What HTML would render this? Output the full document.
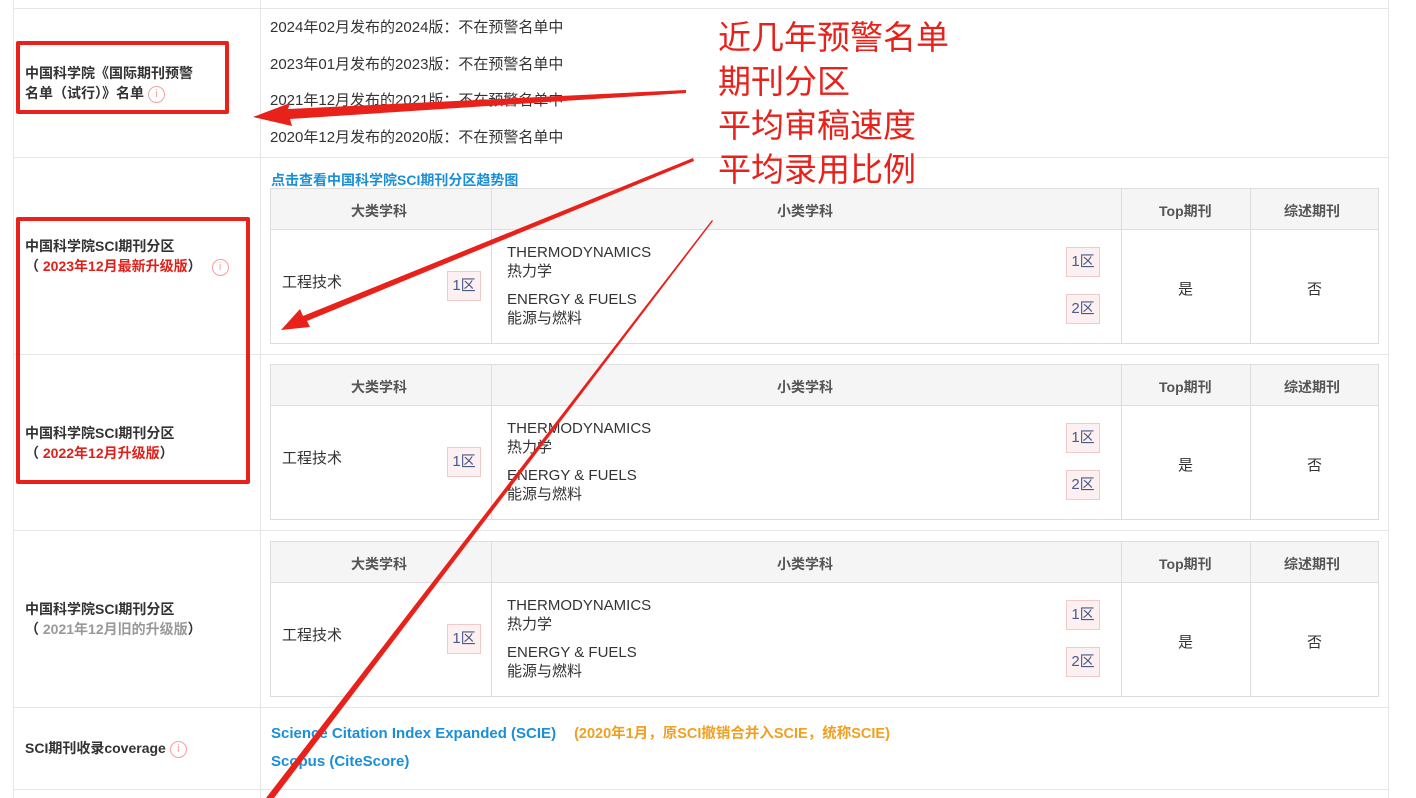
<!DOCTYPE html>
<html><head><meta charset="utf-8"><style>
body{margin:0;width:1416px;height:798px;background:#fff;position:relative;overflow:hidden;font-family:"Liberation Sans","Noto Sans CJK SC",sans-serif;color:#333}
.a{position:absolute}
.hl{position:absolute;height:1px;background:#e6e6e6}
.vl{position:absolute;width:1px;background:#e6e6e6}
.lab{position:absolute;left:25px;font-size:14px;font-weight:bold;line-height:20px;color:#333}
.t{position:absolute;left:270px;width:1107px;border:1px solid #ddd;font-size:15px}
.th{height:40px;background:#f5f5f5;border-bottom:1px solid #ddd;position:relative;font-size:14px}
.th span{position:absolute;top:12px;font-weight:bold;color:#555}
.z{position:absolute;width:32px;height:28px;border:1px solid #f2c9c9;background:#fdf0f0;color:#4a5a8a;font-size:15px;line-height:28px;text-align:center}
.info{display:inline-block;width:15px;height:15px;border:1.5px solid #f3a0a0;border-radius:50%;color:#f3a0a0;font-size:11px;line-height:15px;text-align:center;font-weight:normal;vertical-align:middle;margin-left:4px}
.ann{position:absolute;left:718px;font-size:33px;color:#e8211b;line-height:44px}
.rb{position:absolute;border:4px solid #e8211b;border-radius:2px}
</style></head><body>
<div class="vl" style="left:13px;top:0;height:798px"></div>
<div class="vl" style="left:260px;top:0;height:798px"></div>
<div class="vl" style="left:1388px;top:0;height:798px"></div>
<div class="hl" style="left:13px;width:1376px;top:8px"></div>
<div class="hl" style="left:13px;width:1376px;top:157px"></div>
<div class="hl" style="left:13px;width:1376px;top:354px"></div>
<div class="hl" style="left:13px;width:1376px;top:530px"></div>
<div class="hl" style="left:13px;width:1376px;top:707px"></div>
<div class="hl" style="left:13px;width:1376px;top:789px"></div>

<div class="a" style="left:270px;top:10px;font-size:15px;line-height:36.7px">2024年02月发布的2024版：不在预警名单中<br>2023年01月发布的2023版：不在预警名单中<br>2021年12月发布的2021版：不在预警名单中<br>2020年12月发布的2020版：不在预警名单中</div>
<div class="lab" style="top:63px">中国科学院《国际期刊预警<br>名单（试行）》名单<span class="info">i</span></div>

<div class="a" style="left:271px;top:170px;font-size:14px;font-weight:bold;color:#1a8fd8">点击查看中国科学院SCI期刊分区趋势图</div>
<div class="lab" style="top:236px">中国科学院SCI期刊分区<br>（ <span style="color:#e0201b">2023年12月最新升级版</span>）<span class="info" style="margin-left:10px">i</span></div>
<div class="lab" style="top:423px">中国科学院SCI期刊分区<br>（ <span style="color:#e0201b">2022年12月升级版</span>）</div>
<div class="lab" style="top:599px">中国科学院SCI期刊分区<br>（ <span style="color:#999">2021年12月旧的升级版</span>）</div>
<div class="lab" style="top:738px">SCI期刊收录coverage<span class="info">i</span></div>
<div class="a" style="left:271px;top:722px;font-size:15px;font-weight:bold;color:#1a8fd8">Science Citation Index Expanded (SCIE)<span style="color:#f0a020;margin-left:18px;font-size:14.5px">(2020年1月，原SCI撤销合并入SCIE，统称SCIE)</span></div>
<div class="a" style="left:271px;top:753px;font-size:15px;font-weight:bold;color:#1a8fd8">Scopus (CiteScore)</div>

<div class="t" style="top:188px;height:154px"></div>
<div class="t" style="top:364px;height:154px"></div>
<div class="t" style="top:541px;height:154px"></div>
<script>
document.querySelectorAll('.t').forEach(function(t){
t.innerHTML='<div class="th"><span style="left:80px">大类学科</span><span style="left:506px">小类学科</span><span style="left:888px">Top期刊</span><span style="left:1013px">综述期刊</span></div>'+
'<div class="vl" style="left:220px;top:0;height:154px;background:#ddd"></div><div class="vl" style="left:850px;top:0;height:154px;background:#ddd"></div><div class="vl" style="left:979px;top:0;height:154px;background:#ddd"></div>'+
'<div class="a" style="left:11px;top:82px">工程技术</div><div class="z" style="left:176px;top:82px">1区</div>'+
'<div class="a" style="left:236px;top:54px;line-height:19px">THERMODYNAMICS<br>热力学</div><div class="a" style="left:236px;top:101px;line-height:19px">ENERGY &amp; FUELS<br>能源与燃料</div>'+
'<div class="z" style="left:795px;top:58px">1区</div><div class="z" style="left:795px;top:105px">2区</div>'+
'<div class="a" style="left:907px;top:89px">是</div><div class="a" style="left:1036px;top:89px">否</div>';
});
</script>

<div class="ann" style="top:16px">近几年预警名单<br>期刊分区<br>平均审稿速度<br>平均录用比例</div>
<div class="rb" style="left:16px;top:41px;width:205px;height:65px"></div>
<div class="rb" style="left:16px;top:217px;width:226px;height:259px"></div>
<svg class="a" style="left:0;top:0" width="1416" height="798">
<polygon points="686,90 288,109 290,103 253,117 292,126 290,119 686,93" fill="#e8211b"/>
<polygon points="693,158 303,316 300,309 281,330 310,327 307,321 694,161" fill="#e8211b"/>
<polygon points="712,220 266,798 274,798 713,221" fill="#e8211b"/>
</svg>
</body></html>
